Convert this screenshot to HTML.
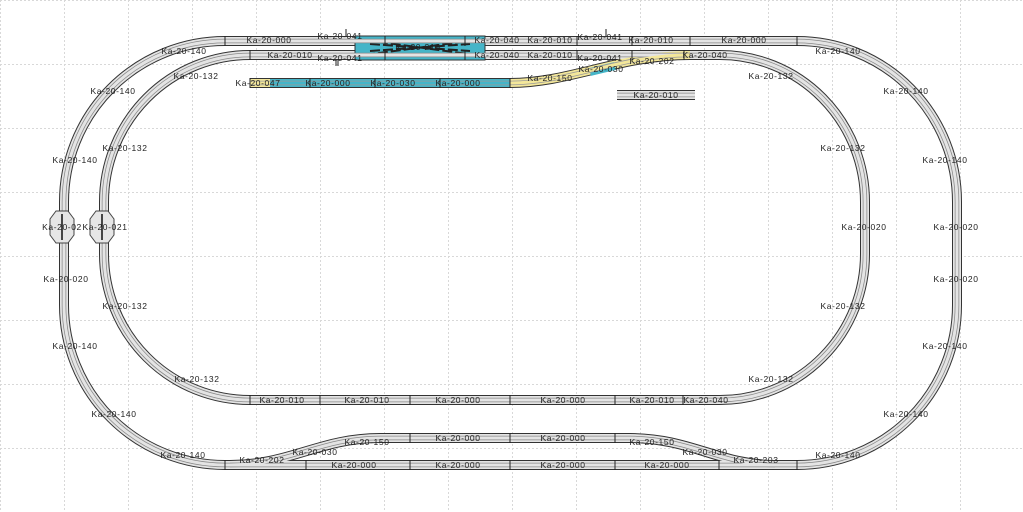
<!DOCTYPE html>
<html><head><meta charset="utf-8"><style>
html,body{margin:0;padding:0;background:#fff;}
svg{display:block;}
text{font-family:"Liberation Sans",sans-serif;font-size:8.5px;letter-spacing:0.6px;fill:#222;text-anchor:middle;dominant-baseline:central;}
</style></head><body>
<svg width="1023" height="512" viewBox="0 0 1023 512" xmlns="http://www.w3.org/2000/svg">
<defs>
<pattern id="g" width="64" height="64" patternUnits="userSpaceOnUse">
<path d="M0.5 0V64M0 0.5H64" stroke="#d8d8d8" stroke-width="1" stroke-dasharray="2,2" fill="none"/>
</pattern>
</defs>
<rect width="1023" height="512" fill="url(#g)"/>
<g fill="none" id="tr">
<path id="p1" d="M225,41 H797 A160,161 0 0 1 957,202 V305 A160,160 0 0 1 797,465 H225 A161,160 0 0 1 64,305 V202 A161,161 0 0 1 225,41 Z"/>
<path id="p2" d="M250,55 H720 A145,147 0 0 1 865,202 V254 A145,146 0 0 1 720,400 H250 A146,146 0 0 1 104,254 V202 A146,147 0 0 1 250,55 Z"/>
<path id="p3" d="M230,465 C290,465 320,438 380,438 H630 C690,438 720,465 775,465"/>
<path id="p4" d="M250,83 H510 C570,83 620,55 690,55"/>
<path id="p5" d="M617,95 H695"/>
</g>
<g fill="none">
<use href="#p1" stroke="#333" stroke-width="10"/><use href="#p2" stroke="#333" stroke-width="10"/><use href="#p3" stroke="#333" stroke-width="10"/><use href="#p4" stroke="#333" stroke-width="10"/><use href="#p5" stroke="#333" stroke-width="10"/>
<use href="#p1" stroke="#e4e4e4" stroke-width="8"/><use href="#p2" stroke="#e4e4e4" stroke-width="8"/><use href="#p3" stroke="#e4e4e4" stroke-width="8"/><use href="#p5" stroke="#e4e4e4" stroke-width="8"/>
<use href="#p4" stroke="#f3e79a" stroke-width="8"/>
<path d="M270,83 H510" stroke="#45b5c8" stroke-width="8"/>
<path d="M590,72 L615,66" stroke="#45b5c8" stroke-width="8"/>
<rect x="355" y="36" width="130" height="24" fill="#45b5c8" stroke="#333"/>
<path d="M365,40 L475,55 M365,55 L475,40 M370,44 L470,51 M370,51 L470,44" stroke="#222" stroke-width="2" stroke-dasharray="10,3"/>
<use href="#p1" stroke="#888" stroke-width="4.5"/><use href="#p2" stroke="#888" stroke-width="4.5"/><use href="#p3" stroke="#888" stroke-width="4.5"/><use href="#p4" stroke="#999" stroke-width="4.5"/><use href="#p5" stroke="#888" stroke-width="4.5"/>
<use href="#p1" stroke="#e4e4e4" stroke-width="3"/><use href="#p2" stroke="#e4e4e4" stroke-width="3"/><use href="#p3" stroke="#e4e4e4" stroke-width="3"/><use href="#p5" stroke="#e4e4e4" stroke-width="3"/>
<use href="#p4" stroke="#f3e79a" stroke-width="3"/>
<path d="M270,83 H510" stroke="#45b5c8" stroke-width="3"/>
</g>
<g stroke="#222" stroke-width="1">
<path d="M225,36V46M385,36V46M465,36V46M577,36V46M632,36V46M690,36V46M797,36V46"/>
<path d="M250,50V60M385,50V60M465,50V60M577,50V60M632,50V60M684,50V60"/>
<path d="M250,78V88M310,78V88M375,78V88M440,78V88M510,78V88"/>
<path d="M250,395V405M320,395V405M410,395V405M510,395V405M615,395V405M683,395V405"/>
<path d="M410,433V443M510,433V443M615,433V443"/>
<path d="M225,460V470M306,460V470M410,460V470M510,460V470M615,460V470M719,460V470M797,460V470"/>
<path d="M346,29V36M606,29V36M336,60V66M338,60V66"/>
</g>
<g fill="#e6e6e6" stroke="#444" stroke-width="1">
<polygon points="56,211 68,211 74,219 74,235 68,243 56,243 50,235 50,219"/>
<polygon points="96,211 108,211 114,219 114,235 108,243 96,243 90,235 90,219"/>
</g>
<g stroke="#111" stroke-width="1.5"><path d="M62,214V240M102,214V240"/></g>
<g>
<text x="269" y="40">Ka-20-000</text><text x="340" y="36">Ka-20-041</text><text x="418" y="47">Ka-20-210</text><text x="497" y="40">Ka-20-040</text><text x="550" y="40">Ka-20-010</text><text x="600" y="37">Ka-20-041</text><text x="651" y="40">Ka-20-010</text><text x="744" y="40">Ka-20-000</text>
<text x="290" y="55">Ka-20-010</text><text x="340" y="58">Ka-20-041</text><text x="497" y="55">Ka-20-040</text><text x="550" y="55">Ka-20-010</text><text x="600" y="58">Ka-20-041</text><text x="652" y="61">Ka-20-202</text><text x="705" y="55">Ka-20-040</text>
<text x="258" y="83">Ka-20-047</text><text x="328" y="83">Ka-20-000</text><text x="393" y="83">Ka-20-030</text><text x="458" y="83">Ka-20-000</text><text x="550" y="78">Ka-20-150</text><text x="601" y="69">Ka-20-030</text><text x="656" y="95">Ka-20-010</text>
<text x="184" y="51">Ka-20-140</text><text x="838" y="51">Ka-20-140</text><text x="113" y="91">Ka-20-140</text><text x="906" y="91">Ka-20-140</text><text x="75" y="160">Ka-20-140</text><text x="945" y="160">Ka-20-140</text><text x="75" y="346">Ka-20-140</text><text x="945" y="346">Ka-20-140</text><text x="114" y="414">Ka-20-140</text><text x="906" y="414">Ka-20-140</text><text x="183" y="455">Ka-20-140</text><text x="838" y="455">Ka-20-140</text>
<text x="196" y="76">Ka-20-132</text><text x="771" y="76">Ka-20-132</text><text x="125" y="148">Ka-20-132</text><text x="843" y="148">Ka-20-132</text><text x="125" y="306">Ka-20-132</text><text x="843" y="306">Ka-20-132</text><text x="197" y="379">Ka-20-132</text><text x="771" y="379">Ka-20-132</text>
<text x="66" y="279">Ka-20-020</text><text x="864" y="227">Ka-20-020</text><text x="956" y="227">Ka-20-020</text><text x="956" y="279">Ka-20-020</text><text x="62" y="227">Ka-20-02</text><text x="105" y="227">Ka-20-021</text>
<text x="282" y="400">Ka-20-010</text><text x="367" y="400">Ka-20-010</text><text x="458" y="400">Ka-20-000</text><text x="563" y="400">Ka-20-000</text><text x="652" y="400">Ka-20-010</text><text x="706" y="400">Ka-20-040</text>
<text x="367" y="442">Ka-20-150</text><text x="458" y="438">Ka-20-000</text><text x="563" y="438">Ka-20-000</text><text x="652" y="442">Ka-20-150</text><text x="315" y="452">Ka-20-030</text><text x="705" y="452">Ka-20-030</text><text x="262" y="460">Ka-20-202</text><text x="756" y="460">Ka-20-203</text>
<text x="354" y="465">Ka-20-000</text><text x="458" y="465">Ka-20-000</text><text x="563" y="465">Ka-20-000</text><text x="667" y="465">Ka-20-000</text>
</g>
</svg>
</body></html>
